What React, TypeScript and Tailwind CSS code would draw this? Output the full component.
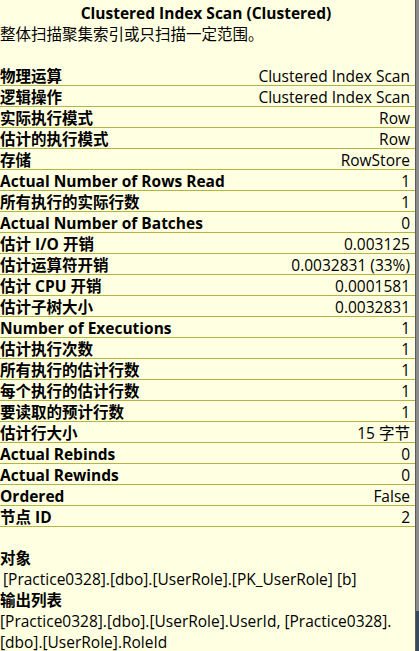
const rows: { label: string; value: string }[] = [
  { label: "物理运算", value: "Clustered Index Scan" },
  { label: "逻辑操作", value: "Clustered Index Scan" },
  { label: "实际执行模式", value: "Row" },
  { label: "估计的执行模式", value: "Row" },
  { label: "存储", value: "RowStore" },
  { label: "Actual Number of Rows Read", value: "1" },
  { label: "所有执行的实际行数", value: "1" },
  { label: "Actual Number of Batches", value: "0" },
  { label: "估计 I/O 开销", value: "0.003125" },
  { label: "估计运算符开销", value: "0.0032831 (33%)" },
  { label: "估计 CPU 开销", value: "0.0001581" },
  { label: "估计子树大小", value: "0.0032831" },
  { label: "Number of Executions", value: "1" },
  { label: "估计执行次数", value: "1" },
  { label: "所有执行的估计行数", value: "1" },
  { label: "每个执行的估计行数", value: "1" },
  { label: "要读取的预计行数", value: "1" },
  { label: "估计行大小", value: "15 字节" },
  { label: "Actual Rebinds", value: "0" },
  { label: "Actual Rewinds", value: "0" },
  { label: "Ordered", value: "False" },
  { label: "节点 ID", value: "2" },
];

export default function App() {
  return (
    <div
      className="flex w-[419px] h-[651px] overflow-hidden bg-[#ffffe1] text-black text-[15.5px] leading-[21px]"
      style={{ fontFamily: '"Open Sans", "Noto Sans CJK SC", sans-serif' }}
    >
      <div className="flex-1 min-w-0 pt-[3px]">
        {/* 标题 */}
        <div className="text-center font-bold pr-[3px]">Clustered Index Scan (Clustered)</div>
        <div>整体扫描聚集索引或只扫描一定范围。</div>
        <div className="h-[20px]" />

        {/* 属性表 */}
        <div>
          {rows.map((r) => (
            <div
              key={r.label}
              className="flex justify-between items-center h-[21px] pt-[2px] border-b border-[#b7b340] pr-[5px]"
            >
              <span className="font-bold">{r.label}</span>
              <span>{r.value}</span>
            </div>
          ))}
        </div>

        <div className="h-[21px]" />
        <div className="font-bold">对象</div>
        <div className="pl-[3px]">[Practice0328].[dbo].[UserRole].[PK_UserRole] [b]</div>
        <div className="font-bold">输出列表</div>
        <div className="pr-[6px] whitespace-nowrap">
          [Practice0328].[dbo].[UserRole].UserId, [Practice0328].
          <br />
          [dbo].[UserRole].RoleId
        </div>
      </div>

      {/* 右侧窗口边缘 */}
      <div className="w-[4px] flex flex-col border-l border-[#5a5a5a]">
        <div className="flex-1 bg-[#8c8c8c]" />
        <div className="h-[40px] bg-[#3a4a5e]" />
      </div>
    </div>
  );
}
